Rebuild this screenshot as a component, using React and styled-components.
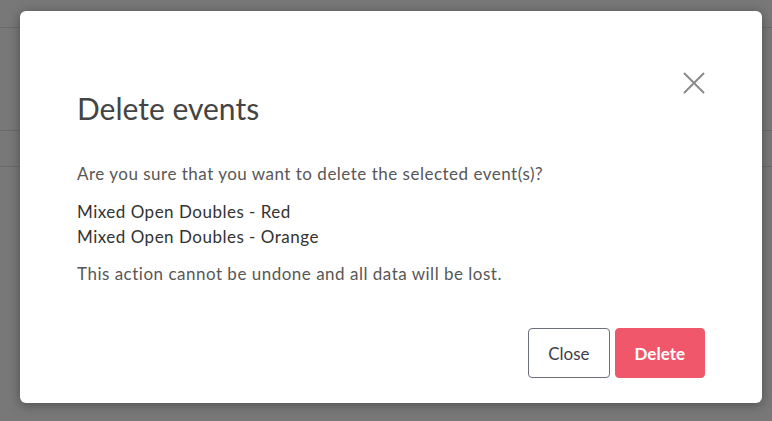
import React from "react";
import styled, { createGlobalStyle } from "styled-components";

const GlobalStyle = createGlobalStyle`
  html, body {
    margin: 0;
    padding: 0;
    width: 772px;
    height: 421px;
    overflow: hidden;
    background: #777777;
  }
  * {
    box-sizing: border-box;
  }
`;

const Page = styled.div`
  position: relative;
  width: 772px;
  height: 421px;
  background: #787878;
  font-family: Lato, "Noto Sans", sans-serif;
`;

const PageRow = styled.div`
  height: ${(p) => p.h}px;
  border-bottom: 1px solid #6b6b6b;
`;

const Modal = styled.div`
  position: absolute;
  left: 20px;
  top: 11px;
  width: 742px;
  height: 392px;
  background: #ffffff;
  border-radius: 6px;
  box-shadow: 0 2px 12px rgba(0, 0, 0, 0.35);
  padding: 79px 57px 0 57px;
  display: flex;
  flex-direction: column;
`;

const CloseIcon = styled.button`
  position: absolute;
  top: 61px;
  right: 57px;
  width: 22px;
  height: 22px;
  padding: 0;
  border: none;
  background: none;
  cursor: pointer;
  color: #8a8a8a;
`;

const Title = styled.h2`
  margin: 0 0 35px;
  font-size: 30px;
  line-height: 36px;
  font-weight: 400;
  color: #444444;
`;

const Text = styled.p`
  margin: 0 0 ${(p) => p.mb || 0}px;
  font-size: 17px;
  letter-spacing: 0.5px;
  line-height: 25px;
  color: ${(p) => (p.dark ? "#333333" : "#575757")};
`;

const Footer = styled.div`
  margin-top: auto;
  margin-bottom: 25px;
  display: flex;
  justify-content: flex-end;
  gap: 5px;
`;

const Button = styled.button`
  height: 50px;
  padding: 0 19px;
  border-radius: 4px;
  font-family: inherit;
  font-size: 17px;
  font-weight: ${(p) => (p.primary ? 700 : 400)};
  border: 1px solid ${(p) => (p.primary ? "#f0576b" : "#6c6f7d")};
  background: ${(p) => (p.primary ? "#f0576b" : "#ffffff")};
  color: ${(p) => (p.primary ? "#ffffff" : "#3d3f4a")};
  cursor: pointer;
`;

const events = ["Mixed Open Doubles - Red", "Mixed Open Doubles - Orange"];

export default function App() {
  return (
    <Page>
      <GlobalStyle />
      <PageRow h={28} />
      <PageRow h={103} />
      <PageRow h={36} />
      <Modal>
        <CloseIcon aria-label="Close">
          <svg width="22" height="22" viewBox="0 0 22 22">
            <path d="M1 1 L21 21 M21 1 L1 21" stroke="currentColor" strokeWidth="2" />
          </svg>
        </CloseIcon>
        <Title>Delete events</Title>
        <Text mb={13}>Are you sure that you want to delete the selected event(s)?</Text>
        {events.map((e, i) => (
          <Text key={e} dark mb={i === events.length - 1 ? 12 : 0}>
            {e}
          </Text>
        ))}
        <Text>This action cannot be undone and all data will be lost.</Text>
        <Footer>
          <Button>Close</Button>
          <Button primary>Delete</Button>
        </Footer>
      </Modal>
    </Page>
  );
}
